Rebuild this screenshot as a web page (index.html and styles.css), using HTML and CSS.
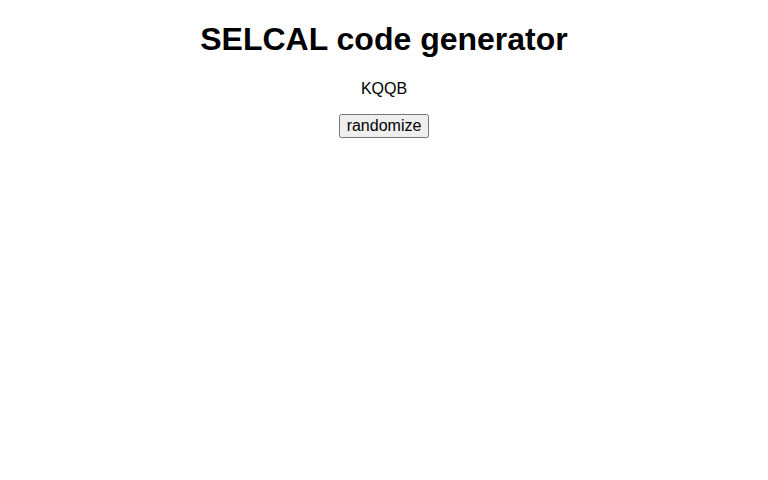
FILE: index.html
```html
<!DOCTYPE html>
<html>
  <head>
    <meta charset="utf-8" />
    <title>SELCAL code generator</title>
    <link rel="stylesheet" href="styles.css">
  </head>
  <body>
    <h1>SELCAL code generator</h1>
    <p id="code" class="code">KQQB</p>
    <p><button id="randomBtn">randomize</button></p>
    <script>
      "use strict";

      const letters = "ABCDEFGHJKLMPQRS";
      const codeBox = document.querySelector("#code");
      const randomBtn = document.querySelector("#randomBtn");

      function pick() {
        return letters[Math.floor(Math.random() * letters.length)];
      }

      randomBtn.addEventListener("click", function () {
        codeBox.innerHTML = pick() + pick() + pick() + pick();
      });
    </script>
  </body>
</html>
```

FILE: styles.css
```css
body {
  margin: 0;
  font-family: "Liberation Sans", Arial, sans-serif;
  text-align: center;
  color: #000;
  background-color: #fff;
}
button {
  font-family: "Liberation Sans", Arial, sans-serif;
  font-size: 16px;
}
```
